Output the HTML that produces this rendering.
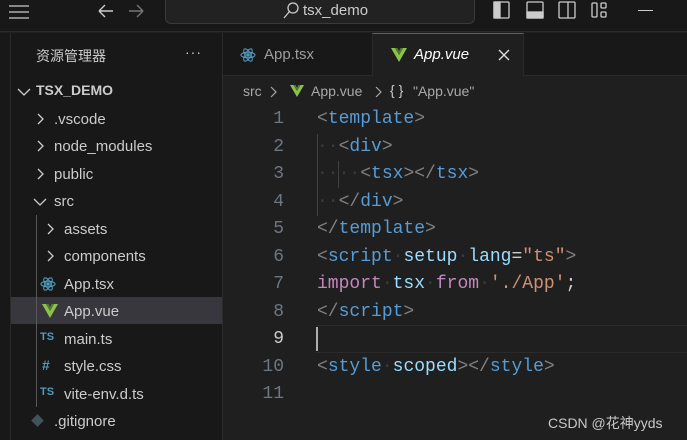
<!DOCTYPE html>
<html><head><meta charset="utf-8"><style>
*{margin:0;padding:0;box-sizing:border-box}
body{width:687px;height:440px;overflow:hidden;background:#1f1f1f;position:relative;font-family:"Liberation Sans","Noto Sans CJK SC",sans-serif;color:#ccc}
.abs{position:absolute}
#title{left:0;top:0;width:687px;height:32px;background:#181818;border-bottom:1px solid #2b2b2b}
#search{left:165px;top:0;width:310px;height:24px;border:1px solid #3a3a3a;border-top:none;border-radius:0 0 6px 6px;background:#222}
#side{left:0;top:33px;width:223px;height:407px;background:#181818;border-right:1px solid #2b2b2b}
#act{left:0;top:33px;width:11px;height:407px;background:#181818;border-right:1px solid #2b2b2b}
.row{position:absolute;left:11px;width:211px;height:27px;font-size:15px;line-height:27px;color:#cccccc}
.code{position:absolute;left:317px;font-family:"Liberation Mono",monospace;font-size:18px;line-height:27.5px;white-space:pre;color:#cccccc}
.ln{position:absolute;left:230px;width:54px;text-align:right;font-family:"Liberation Mono",monospace;font-size:18px;line-height:27.5px;color:#6e7681}
.p{color:#808080}.t{color:#569cd6}.a{color:#9cdcfe}.s{color:#ce9178}.k{color:#c586c0}.d{color:#3b3b3b}
</style></head><body>
<div id="title" class="abs"></div>
<svg class="abs" style="left:8px;top:4px" width="22" height="16"><g stroke="#ccc" stroke-width="1.3"><line x1="1" y1="2" x2="21" y2="2"/><line x1="1" y1="8" x2="21" y2="8"/><line x1="1" y1="14" x2="21" y2="14"/></g></svg>
<svg class="abs" style="left:96px;top:2px" width="50" height="18" fill="none" stroke-width="1.4"><path d="M3 9h14M3 9l6-6M3 9l6 6" stroke="#ccc"/><path d="M47 9H33M47 9l-6-6M47 9l-6 6" stroke="#777"/></svg>
<div id="search" class="abs"></div>
<svg class="abs" style="left:283px;top:2px" width="16" height="18" fill="none" stroke="#ccc" stroke-width="1.3"><circle cx="10" cy="6" r="5"/><line x1="6.5" y1="9.5" x2="1" y2="16"/></svg>
<div class="abs" style="left:303px;top:2px;font-size:15px;color:#ccc">tsx_demo</div>
<svg class="abs" style="left:493px;top:1px" width="130" height="18" fill="none" stroke="#ccc" stroke-width="1.3">
<rect x="1" y="1" width="15" height="16" rx="1"/><rect x="1" y="1" width="6" height="16" fill="#ccc"/>
<rect x="34" y="1" width="16" height="16" rx="1"/><rect x="34" y="11" width="16" height="6" fill="#ccc"/>
<rect x="66" y="1" width="16" height="16" rx="1"/><line x1="75" y1="1" x2="75" y2="17"/>
<rect x="99" y="2" width="5" height="14" rx="1"/><rect x="108" y="2" width="5" height="5" rx="1"/><rect x="108" y="11" width="5" height="5" rx="1"/>
</svg>
<div class="abs" style="left:638px;top:10px;width:15px;height:1px;background:#ccc"></div>

<div id="side" class="abs"></div>
<div id="act" class="abs"></div>
<div class="abs" style="left:36px;top:46px;font-size:14px;color:#ccc">资源管理器</div>
<div class="abs" style="left:185px;top:44px;font-size:14px;color:#ccc;letter-spacing:1px">···</div>
<svg class="abs" style="left:17px;top:87px" width="14" height="10" fill="none" stroke="#ccc" stroke-width="1.3"><path d="M1 2l6 6 6-6"/></svg>
<div class="abs" style="left:36px;top:82px;font-size:14px;font-weight:bold;color:#ccc">TSX_DEMO</div>

<div class="row" style="top:106px;padding-left:43px">.vscode</div>
<div class="row" style="top:133px;padding-left:43px">node_modules</div>
<div class="row" style="top:161px;padding-left:43px">public</div>
<div class="row" style="top:188px;padding-left:43px">src</div>
<div class="row" style="top:216px;padding-left:53px">assets</div>
<div class="row" style="top:243px;padding-left:53px">components</div>
<div class="row" style="top:271px;padding-left:53px">App.tsx</div>
<div class="row" style="top:297px;padding-left:53px;background:#37373d;height:27px"></div>
<div class="row" style="top:298px;padding-left:53px">App.vue</div>
<div class="row" style="top:326px;padding-left:53px">main.ts</div>
<div class="row" style="top:353px;padding-left:53px">style.css</div>
<div class="row" style="top:381px;padding-left:53px">vite-env.d.ts</div>
<div class="row" style="top:408px;padding-left:43px">.gitignore</div>
<svg class="abs" style="left:36px;top:113px" width="8" height="12" fill="none" stroke="#ccc" stroke-width="1.3"><path d="M2 1l5 5-5 5"/></svg>
<svg class="abs" style="left:36px;top:140px" width="8" height="12" fill="none" stroke="#ccc" stroke-width="1.3"><path d="M2 1l5 5-5 5"/></svg>
<svg class="abs" style="left:36px;top:168px" width="8" height="12" fill="none" stroke="#ccc" stroke-width="1.3"><path d="M2 1l5 5-5 5"/></svg>
<svg class="abs" style="left:33px;top:198px" width="14" height="8" fill="none" stroke="#ccc" stroke-width="1.3"><path d="M1 1l6 6 6-6"/></svg>
<svg class="abs" style="left:46px;top:223px" width="8" height="12" fill="none" stroke="#ccc" stroke-width="1.3"><path d="M2 1l5 5-5 5"/></svg>
<svg class="abs" style="left:46px;top:250px" width="8" height="12" fill="none" stroke="#ccc" stroke-width="1.3"><path d="M2 1l5 5-5 5"/></svg>
<div class="abs" style="left:36px;top:215px;width:1px;height:192px;background:#585858"></div>
<svg class="abs" style="left:40px;top:276px" width="16" height="16" fill="none" stroke="#519aba" stroke-width="1.1"><ellipse cx="8" cy="8" rx="7" ry="2.8"/><ellipse cx="8" cy="8" rx="7" ry="2.8" transform="rotate(60 8 8)"/><ellipse cx="8" cy="8" rx="7" ry="2.8" transform="rotate(-60 8 8)"/><circle cx="8" cy="8" r="1.2" fill="#519aba"/></svg>
<svg class="abs" style="left:42px;top:304px" width="16" height="14"><path d="M0 0h4l4 7 4-7h4L8 14z" fill="#8dc149"/><path d="M4 0h2.5L8 3 9.5 0H12L8 7z" fill="#4e7b2a"/></svg>
<div class="abs" style="left:40px;top:331px;font-size:11px;font-weight:bold;color:#519aba">TS</div>
<div class="abs" style="left:42px;top:357px;font-size:14px;font-weight:bold;color:#519aba">#</div>
<div class="abs" style="left:40px;top:386px;font-size:11px;font-weight:bold;color:#519aba">TS</div>
<div class="abs" style="left:33px;top:416px;width:9px;height:9px;background:#41535b;transform:rotate(45deg)"></div>

<!-- tabs -->
<div class="abs" style="left:223px;top:33px;width:464px;height:43px;background:#181818;border-bottom:1px solid #2b2b2b"></div>
<div class="abs" style="left:372px;top:33px;width:152px;height:43px;background:#1f1f1f;border-top:1px solid #0078d4;border-left:1px solid #2b2b2b;border-right:1px solid #2b2b2b"></div>
<svg class="abs" style="left:240px;top:47px" width="16" height="16" fill="none" stroke="#519aba" stroke-width="1.1"><ellipse cx="8" cy="8" rx="7" ry="2.8"/><ellipse cx="8" cy="8" rx="7" ry="2.8" transform="rotate(60 8 8)"/><ellipse cx="8" cy="8" rx="7" ry="2.8" transform="rotate(-60 8 8)"/><circle cx="8" cy="8" r="1.2" fill="#519aba"/></svg>
<div class="abs" style="left:264px;top:46px;font-size:15px;color:#9d9d9d">App.tsx</div>
<svg class="abs" style="left:391px;top:48px" width="16" height="14"><path d="M0 0h4l4 7 4-7h4L8 14z" fill="#8dc149"/><path d="M4 0h2.5L8 3 9.5 0H12L8 7z" fill="#4e7b2a"/></svg>
<div class="abs" style="left:414px;top:46px;font-size:15px;color:#fff;font-style:italic">App.vue</div>
<svg class="abs" style="left:498px;top:49px" width="12" height="12" stroke="#ddd" stroke-width="1.4"><path d="M1 1l10 10M11 1L1 11"/></svg>

<!-- breadcrumb -->
<div class="abs" style="left:243px;top:83px;font-size:14px;color:#a9a9a9;white-space:pre">src</div>
<svg class="abs" style="left:270px;top:86px" width="8" height="12" fill="none" stroke="#a9a9a9" stroke-width="1.2"><path d="M1 1l5 5-5 5"/></svg>
<svg class="abs" style="left:290px;top:85px" width="14" height="12"><path d="M0 0h3.5l3.5 6 3.5-6H14L7 12z" fill="#8dc149"/><path d="M3.5 0h2L7 2.5 8.5 0h2L7 6z" fill="#4e7b2a"/></svg>
<div class="abs" style="left:311px;top:83px;font-size:14px;color:#a9a9a9">App.vue</div>
<svg class="abs" style="left:375px;top:86px" width="8" height="12" fill="none" stroke="#a9a9a9" stroke-width="1.2"><path d="M1 1l5 5-5 5"/></svg>
<div class="abs" style="left:390px;top:82px;font-size:14px;color:#ccc">{ }</div>
<div class="abs" style="left:413px;top:83px;font-size:14px;color:#a9a9a9">"App.vue"</div>

<!-- current line -->
<div class="abs" style="left:316px;top:325px;width:371px;height:28px;border-top:1px solid #2b2b2b;border-bottom:1px solid #2b2b2b"></div>
<div class="abs" style="left:316px;top:327px;width:2px;height:24px;background:#aeafad"></div>
<div class="abs" style="left:317px;top:134px;width:1px;height:82px;background:#404040"></div>
<div class="abs" style="left:338px;top:161px;width:1px;height:27px;background:#404040"></div>

<div class="ln" style="top:106px">1<br>2<br>3<br>4<br>5<br>6<br>7<br>8<br><span style="color:#ccc">9</span><br>10<br>11</div>
<div class="code" style="top:106px"><span class="p">&lt;</span><span class="t">template</span><span class="p">&gt;</span>
<span class="d">··</span><span class="p">&lt;</span><span class="t">div</span><span class="p">&gt;</span>
<span class="d">····</span><span class="p">&lt;</span><span class="t">tsx</span><span class="p">&gt;&lt;/</span><span class="t">tsx</span><span class="p">&gt;</span>
<span class="d">··</span><span class="p">&lt;/</span><span class="t">div</span><span class="p">&gt;</span>
<span class="p">&lt;/</span><span class="t">template</span><span class="p">&gt;</span>
<span class="p">&lt;</span><span class="t">script</span><span class="d">·</span><span class="a">setup</span><span class="d">·</span><span class="a">lang</span>=<span class="s">"ts"</span><span class="p">&gt;</span>
<span class="k">import</span><span class="d">·</span><span class="a">tsx</span><span class="d">·</span><span class="k">from</span><span class="d">·</span><span class="s">'./App'</span>;
<span class="p">&lt;/</span><span class="t">script</span><span class="p">&gt;</span>

<span class="p">&lt;</span><span class="t">style</span><span class="d">·</span><span class="a">scoped</span><span class="p">&gt;&lt;/</span><span class="t">style</span><span class="p">&gt;</span>
</div>
<div class="abs" style="left:548px;top:413px;font-size:14px;color:#c8c8c8">CSDN @花神yyds</div>
</body></html>
